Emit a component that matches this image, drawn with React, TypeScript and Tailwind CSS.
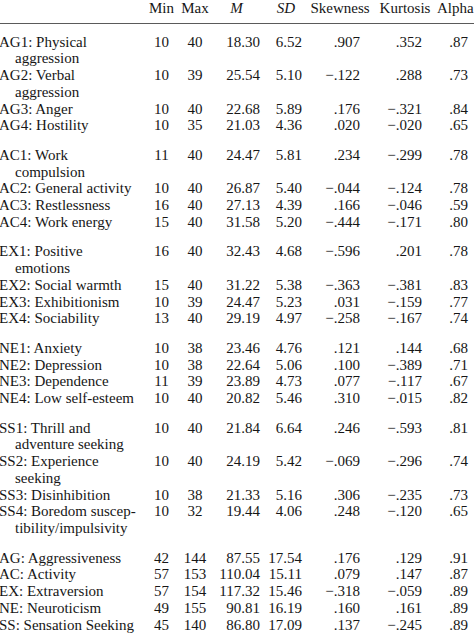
type Row = {
  label: string[];
  min: string;
  max: string;
  m: string;
  sd: string;
  skew: string;
  kurt: string;
  alpha: string;
};

const r = (label: string[], v: string[]): Row => ({
  label,
  min: v[0],
  max: v[1],
  m: v[2],
  sd: v[3],
  skew: v[4],
  kurt: v[5],
  alpha: v[6],
});

const groups: Row[][] = [
  [
    r(["AG1: Physical", "aggression"], ["10", "40", "18.30", "6.52", ".907", ".352", ".87"]),
    r(["AG2: Verbal", "aggression"], ["10", "39", "25.54", "5.10", "−.122", ".288", ".73"]),
    r(["AG3: Anger"], ["10", "40", "22.68", "5.89", ".176", "−.321", ".84"]),
    r(["AG4: Hostility"], ["10", "35", "21.03", "4.36", ".020", "−.020", ".65"]),
  ],
  [
    r(["AC1: Work", "compulsion"], ["11", "40", "24.47", "5.81", ".234", "−.299", ".78"]),
    r(["AC2: General activity"], ["10", "40", "26.87", "5.40", "−.044", "−.124", ".78"]),
    r(["AC3: Restlessness"], ["16", "40", "27.13", "4.39", ".166", "−.046", ".59"]),
    r(["AC4: Work energy"], ["15", "40", "31.58", "5.20", "−.444", "−.171", ".80"]),
  ],
  [
    r(["EX1: Positive", "emotions"], ["16", "40", "32.43", "4.68", "−.596", ".201", ".78"]),
    r(["EX2: Social warmth"], ["15", "40", "31.22", "5.38", "−.363", "−.381", ".83"]),
    r(["EX3: Exhibitionism"], ["10", "39", "24.47", "5.23", ".031", "−.159", ".77"]),
    r(["EX4: Sociability"], ["13", "40", "29.19", "4.97", "−.258", "−.167", ".74"]),
  ],
  [
    r(["NE1: Anxiety"], ["10", "38", "23.46", "4.76", ".121", ".144", ".68"]),
    r(["NE2: Depression"], ["10", "38", "22.64", "5.06", ".100", "−.389", ".71"]),
    r(["NE3: Dependence"], ["11", "39", "23.89", "4.73", ".077", "−.117", ".67"]),
    r(["NE4: Low self-esteem"], ["10", "40", "20.82", "5.46", ".310", "−.015", ".82"]),
  ],
  [
    r(["SS1: Thrill and", "adventure seeking"], ["10", "40", "21.84", "6.64", ".246", "−.593", ".81"]),
    r(["SS2: Experience", "seeking"], ["10", "40", "24.19", "5.42", "−.069", "−.296", ".74"]),
    r(["SS3: Disinhibition"], ["10", "38", "21.33", "5.16", ".306", "−.235", ".73"]),
    r(["SS4: Boredom suscep-", "tibility/impulsivity"], ["10", "32", "19.44", "4.06", ".248", "−.120", ".65"]),
  ],
  [
    r(["AG: Aggressiveness"], ["42", "144", "87.55", "17.54", ".176", ".129", ".91"]),
    r(["AC: Activity"], ["57", "153", "110.04", "15.11", ".079", ".147", ".87"]),
    r(["EX: Extraversion"], ["57", "154", "117.32", "15.46", "−.318", "−.059", ".89"]),
    r(["NE: Neuroticism"], ["49", "155", "90.81", "16.19", ".160", ".161", ".89"]),
    r(["SS: Sensation Seeking"], ["45", "140", "86.80", "17.09", ".137", "−.245", ".89"]),
  ],
];

const cols = "grid grid-cols-[146px_31px_36px_47px_46px_68px_62px_38px]";

function DataRow({ row }: { row: Row }) {
  return (
    <div className={cols}>
      <div className="-ml-px">
        {row.label.map((line, i) => (
          <div key={i} className={i > 0 ? "pl-[16px]" : ""}>
            {line}
          </div>
        ))}
      </div>
      <div className="text-center">{row.min}</div>
      <div className="text-center">{row.max}</div>
      <div className="text-right">{row.m}</div>
      <div className="pr-[4px] text-right">{row.sd}</div>
      <div className="pr-[14px] text-right">{row.skew}</div>
      <div className="pr-[14px] text-right">{row.kurt}</div>
      <div className="pr-[6px] text-right">{row.alpha}</div>
    </div>
  );
}

export default function App() {
  return (
    <div
      className="h-[636px] w-[474px] overflow-hidden whitespace-nowrap bg-white text-[15px] leading-[16.7px] text-[#161616]"
      style={{ fontFamily: '"Liberation Serif", "Times New Roman", serif' }}
    >
      <div className={cols}>
        <div />
        <div className="text-center">Min</div>
        <div className="text-center">Max</div>
        <div className="text-center italic">M</div>
        <div className="pl-[6px] text-center italic">SD</div>
        <div className="text-center">Skewness</div>
        <div className="text-center">Kurtosis</div>
        <div className="pl-[1px]">Alpha</div>
      </div>
      <div className="mt-[6px] h-px bg-[#5a5a5a]" />
      <div className="flex flex-col gap-[13px] pt-[10px]">
        {groups.map((g, gi) => (
          <div key={gi}>
            {g.map((row, ri) => (
              <DataRow key={ri} row={row} />
            ))}
          </div>
        ))}
      </div>
    </div>
  );
}
